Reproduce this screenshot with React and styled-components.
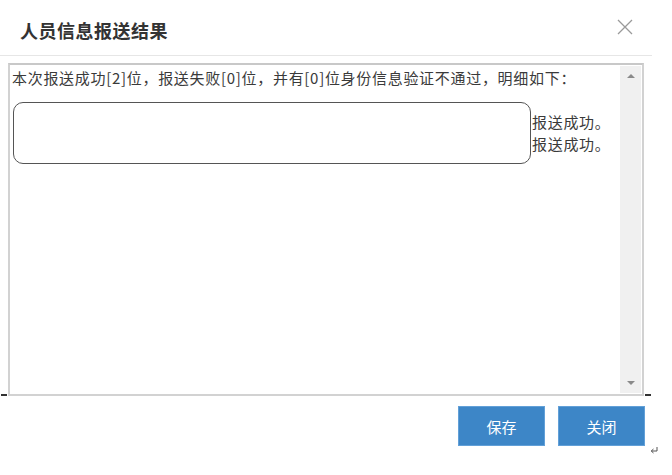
import React from "react";
import styled, { createGlobalStyle } from "styled-components";

const Global = createGlobalStyle`
  html, body { margin: 0; padding: 0; background: #fff; }
  body {
    font-family: "Microsoft YaHei", "Noto Sans CJK SC", "Noto Sans", sans-serif;
    color: #333;
  }
`;

const Page = styled.div`
  width: 672px;
  height: 475px;
  position: relative;
  overflow: hidden;
`;

const Dialog = styled.div`
  width: 652px;
  display: flex;
  flex-direction: column;
`;

const Header = styled.div`
  height: 56px;
  box-sizing: border-box;
  padding: 4px 18px 0 20px;
  display: flex;
  align-items: center;
  justify-content: space-between;
  border-bottom: 1px solid #e6e6e6;
`;

const Title = styled.h2`
  margin: 0;
  font-size: 18px;
  font-weight: bold;
  color: #333;
  letter-spacing: 0.5px;
`;

const CloseButton = styled.button`
  border: 0;
  background: none;
  padding: 0;
  width: 18px;
  height: 18px;
  display: flex;
  align-items: center;
  justify-content: center;
  cursor: pointer;
  margin-top: -6px;
`;

const Body = styled.div`
  padding: 7px 8px 0 8px;
`;

const ResultBox = styled.div`
  position: relative;
  height: 333px;
  box-sizing: border-box;
  border: 2px solid #d2d2d2;
  border-top-color: #c8c8c8;
  display: flex;
`;

const Content = styled.div`
  flex: 1;
  padding: 2px 0 0 2px;
  font-size: 15px;
  line-height: 22px;
  color: #3a3a3a;
  letter-spacing: 0.7px;
`;

const Summary = styled.div`
  white-space: nowrap;
`;

const DetailRow = styled.div`
  display: flex;
  align-items: center;
  margin-top: 13px;
  margin-left: 1px;
`;

const Masked = styled.div`
  width: 516px;
  height: 60px;
  border: 1.5px solid #555;
  border-radius: 10px;
  background: #fff;
  flex: none;
`;

const DetailLines = styled.div`
  display: flex;
  flex-direction: column;
  margin-left: 1px;
`;

const Scrollbar = styled.div`
  width: 21px;
  margin: 1px 1px 1px 0;
  background: #f0f0f0;
  display: flex;
  flex-direction: column;
  justify-content: space-between;
  align-items: center;
  padding: 8px 0 8px;
  box-sizing: border-box;
`;

const Arrow = styled.div`
  width: 0;
  height: 0;
  border-left: 4px solid transparent;
  border-right: 4px solid transparent;
  ${(p) =>
    p.$down
      ? "border-top: 4px solid #8a8a8a;"
      : "border-bottom: 4px solid #8a8a8a;"}
`;

const Tick = styled.span`
  position: absolute;
  bottom: -2px;
  width: 6px;
  height: 2px;
  background: #333;
  ${(p) => (p.$side === "left" ? "left: -9px;" : "right: -9px;")}
`;

const Footer = styled.div`
  position: relative;
  display: flex;
  justify-content: flex-end;
  gap: 13px;
  padding: 10px 7px 0 8px;
`;

const ActionButton = styled.button`
  width: 87px;
  height: 40px;
  background: #3d86c7;
  border: 1px solid #62a0d8;
  color: #fff;
  font-family: inherit;
  font-size: 15px;
  cursor: pointer;
`;

const ReturnMark = styled.svg`
  position: absolute;
  left: 650px;
  top: 51px;
`;

export default function App() {
  return (
    <>
      <Global />
      <Page>
        <Dialog>
          <Header>
            <Title>人员信息报送结果</Title>
            <CloseButton aria-label="close">
              <svg width="16" height="16" viewBox="0 0 16 16">
                <path d="M1 1 L15 15 M15 1 L1 15" stroke="#9a9a9a" strokeWidth="1.3" fill="none" />
              </svg>
            </CloseButton>
          </Header>
          <Body>
            <ResultBox>
              <Content>
                <Summary>本次报送成功[2]位，报送失败[0]位，并有[0]位身份信息验证不通过，明细如下：</Summary>
                <DetailRow>
                  <Masked />
                  <DetailLines>
                    <span>报送成功。</span>
                    <span>报送成功。</span>
                  </DetailLines>
                </DetailRow>
              </Content>
              <Scrollbar>
                <Arrow />
                <Arrow $down />
              </Scrollbar>
              <Tick $side="left" />
              <Tick $side="right" />
            </ResultBox>
          </Body>
          <Footer>
            <ActionButton>保存</ActionButton>
            <ActionButton>关闭</ActionButton>
            {/* paragraph return mark */}
            <ReturnMark width="8" height="7" viewBox="0 0 8 7">
              <path d="M7 0 V4 H1.5 M3.5 2 L1.2 4 L3.5 6" stroke="#555" strokeWidth="1" fill="none" />
            </ReturnMark>
          </Footer>
        </Dialog>
      </Page>
    </>
  );
}
